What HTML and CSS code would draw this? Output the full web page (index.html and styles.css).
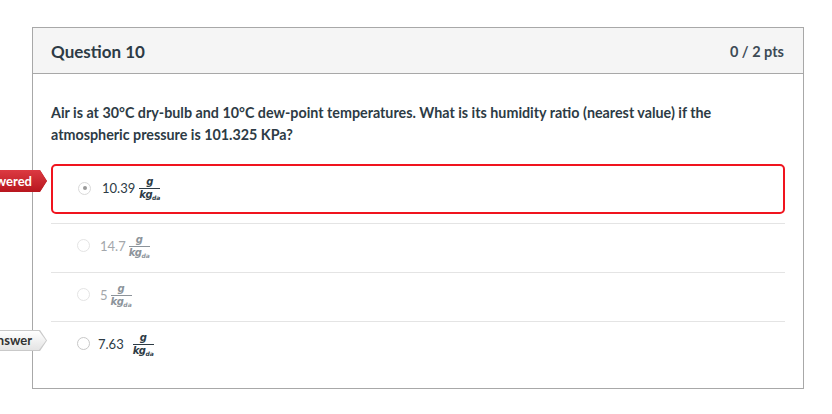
FILE: index.html
```html
<!DOCTYPE html>
<html>
<head>
<meta charset="utf-8">
<link rel="stylesheet" href="styles.css">
</head>
<body>
<div class="page">
  <div class="card">
    <div class="card-header">
      <span class="title">Question 10</span>
      <span class="pts">0 / 2 pts</span>
    </div>
    <div class="card-body">
      <p class="question">Air is at 30°C dry-bulb and 10°C dew-point temperatures. What is its humidity ratio (nearest value) if the atmospheric pressure is 101.325 KPa?</p>
      <div class="answers">
        <div class="answer selected">
          <span class="tag tag-red"><span class="tag-inner">You Answered</span></span>
          <span class="radio checked"></span>
          <span class="value">10.39</span>
          <span class="frac"><span class="num">g</span><span class="den">kg<sub>da</sub></span></span>
        </div>
        <div class="answer muted">
          <span class="radio"></span>
          <span class="value">14.7</span>
          <span class="frac"><span class="num">g</span><span class="den">kg<sub>da</sub></span></span>
        </div>
        <div class="answer muted">
          <span class="radio"></span>
          <span class="value">5</span>
          <span class="frac"><span class="num">g</span><span class="den">kg<sub>da</sub></span></span>
        </div>
        <div class="answer correct">
          <span class="tag tag-grey"><span class="tag-inner">Correct Answer</span></span>
          <span class="radio"></span>
          <span class="value">7.63</span>
          <span class="frac"><span class="num">g</span><span class="den">kg<sub>da</sub></span></span>
        </div>
      </div>
    </div>
  </div>
</div>
</body>
</html>
```

FILE: styles.css
```css
* { box-sizing: border-box; }
html, body { margin: 0; padding: 0; background: #fff; }
body {
  font-family: Lato, "Open Sans", sans-serif;
  color: #2d3b45;
}
.page {
  padding: 27px 0 0 32px;
}
.card {
  width: 772px;
  height: 362px;
  border: 1px solid #a8a8a8;
  background: #fff;
}
.card-header {
  height: 46px;
  background: #f5f5f5;
  border-bottom: 1px solid #a8a8a8;
  display: flex;
  align-items: center;
  justify-content: space-between;
  padding: 2px 19px 0 18px;
}
.title {
  font-size: 17px;
  font-weight: 700;
  color: #2d3b45;
}
.pts {
  font-size: 14.5px;
  font-weight: 700;
  color: #3d4b55;
}
.card-body {
  padding: 28px 18px 0 18px;
}
.question {
  margin: 0;
  max-width: 680px;
  font-size: 14.3px;
  font-weight: 700;
  line-height: 22px;
  color: #2d3b45;
}
.answers {
  margin-top: 18px;
}
.answer {
  position: relative;
  height: 49px;
  border-top: 1px solid #e4e4e4;
  display: flex;
  align-items: center;
  padding-left: 26px;
  padding-bottom: 5px;
  font-size: 13px;
}
.answer.selected {
  height: 50px;
  border: 2px solid #f0141e;
  border-radius: 5px;
  padding-left: 25px;
  padding-bottom: 2px;
  margin-bottom: 9px;
}
.answer.muted { color: #a3a7ab; }
.radio {
  width: 13px;
  height: 13px;
  border-radius: 50%;
  border: 1px solid #d6d6d6;
  background: #fff;
  margin-right: 9px;
  position: relative;
  flex: none;
}
.answer.correct .radio { border-color: #c8c8c8; margin-right: 8px; }
.answer.muted .radio { border-color: #e4e4e4; margin-right: 10px; }
.radio.checked { border-color: #d9d9d9; margin-right: 11px; }
.radio.checked::after {
  content: "";
  position: absolute;
  left: 3.5px;
  top: 3.5px;
  width: 4px;
  height: 4px;
  border-radius: 50%;
  background: #9a9a9a;
}
.value { margin-right: 4px; }
.answer.correct .value { margin-right: 9px; }
.answer.muted .value { margin-right: 3px; }
.frac {
  display: inline-flex;
  flex-direction: column;
  align-items: center;
  font-family: "DejaVu Sans", sans-serif;
  font-style: italic;
  font-weight: 700;
  font-size: 10px;
  line-height: 10px;
  color: #2d3b45;
  margin-top: 5px;
}
.answer.selected .frac { margin-top: 3px; }
.answer.muted .frac { color: #8c939a; }
.frac .num {
  padding: 0 2px 1px;
  border-bottom: 1px solid currentColor;
  width: 100%;
  text-align: center;
}
.frac .den { padding-top: 1px; letter-spacing: -0.5px; }
.frac sub { font-size: 6px; vertical-align: -2px; letter-spacing: 0; }
.tag {
  position: absolute;
  height: 22px;
  padding: 0;
  white-space: nowrap;
  clip-path: polygon(0 0, calc(100% - 7px) 0, 100% 50%, calc(100% - 7px) 100%, 0 100%);
}
.tag-inner {
  display: block;
  height: 100%;
  padding: 0 15px 0 12px;
  font-size: 13px;
  font-weight: 700;
  clip-path: polygon(0 0, calc(100% - 7px) 0, 100% 50%, calc(100% - 7px) 100%, 0 100%);
}
.tag-red {
  top: 4px;
  right: calc(100% + 6px);
  background: #b8161e;
}
.tag-red .tag-inner {
  line-height: 22px;
  color: #fff;
  background: linear-gradient(#dc3a42, #b8161e);
}
.tag-grey {
  top: 8px;
  height: 21px;
  right: calc(100% + 4px);
  background: #c9c9c9;
  padding: 1px 1px 1px 0;
}
.tag-grey .tag-inner {
  padding-right: 14px;
  line-height: 19px;
  color: #333;
  background: linear-gradient(#ffffff, #e4e4e4);
}
```
